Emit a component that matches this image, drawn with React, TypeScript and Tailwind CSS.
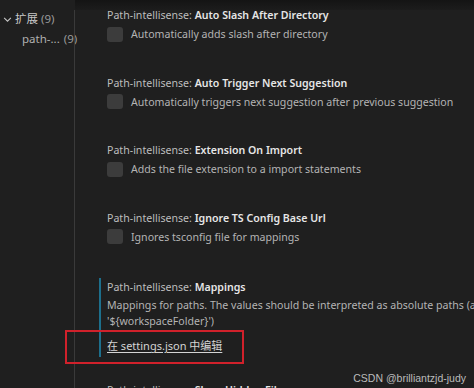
import React from "react";

const font = { fontFamily: '"Noto Sans", "Noto Sans CJK SC", sans-serif' };

function Checkbox() {
  return <div className="w-[16px] h-[15px] rounded-[3px] bg-[#3c3c3c] shrink-0" />;
}

function BoolSetting({ name, desc }: { name: string; desc: string }) {
  return (
    <div className="pl-[32px] h-[67.5px] pt-[6px]">
      <div className="h-[18px] leading-[18px] whitespace-nowrap text-[#bdbdbd]">
        Path-intellisense: <span className="font-semibold text-[#e6e6e6]">{name}</span>
      </div>
      <div className="flex items-center gap-[8px] h-[18px] mt-[1px] whitespace-nowrap text-[#b4b4b4]">
        <Checkbox />
        <span className="leading-[18px]">{desc}</span>
      </div>
    </div>
  );
}

export default function App() {
  return (
    <div
      className="relative w-[474px] h-[388px] overflow-hidden bg-[#1f1f1f] flex text-[10.6px]"
      style={font}
    >
      <div className="w-[74px] shrink-0 pt-[10px] text-[#c8c8c8] whitespace-nowrap text-[11.5px]">
        <div className="flex items-center h-[18px] pl-[3px]">
          <svg width="9" height="9" viewBox="0 0 16 16" className="mr-[3px]">
            <path d="M2 5l6 6 6-6" fill="none" stroke="#c8c8c8" strokeWidth="1.8" />
          </svg>
          <span>扩展</span>
          <span className="ml-[3px] text-[#9a9a9a]">(9)</span>
        </div>
        <div className="flex items-center h-[18px] pl-[22px] mt-[2px]">
          <span className="text-[#b0b0b0]">path-...</span>
          <span className="ml-[4px] text-[#9a9a9a]">(9)</span>
        </div>
      </div>
      <div className="w-px bg-[#3a3a3a] mt-[10px] shrink-0" />
      <div className="relative flex-1 min-w-0 overflow-hidden">
        <div className="absolute top-0 left-0 right-0 h-[10px] bg-gradient-to-b from-[#141414] to-[#1c1c1c]" />
        <BoolSetting name="Auto Slash After Directory" desc="Automatically adds slash after directory" />
        <BoolSetting
          name="Auto Trigger Next Suggestion"
          desc="Automatically triggers next suggestion after previous suggestion"
        />
        <BoolSetting name="Extension On Import" desc="Adds the file extension to a import statements" />
        <BoolSetting name="Ignore TS Config Base Url" desc="Ignores tsconfig file for mappings" />
        <div className="pl-[24px] pt-[8px]">
          <div className="border-l-2 border-[#1d6f8c] pl-[6px] pb-[2px]">
            <div className="h-[18px] leading-[18px] whitespace-nowrap text-[#bdbdbd]">
              Path-intellisense: <span className="font-semibold text-[#e6e6e6]">Mappings</span>
            </div>
            <div className="leading-[16px] whitespace-nowrap text-[#b4b4b4] mt-[1px]">
              <div>Mappings for paths. The values should be interpreted as absolute paths (and can contain</div>
              <div>'${"{"}workspaceFolder{"}"}')</div>
            </div>
            <div className="mt-[8px] leading-[18px] whitespace-nowrap text-[#d4d4d4] underline underline-offset-2 text-[11px]">
              在 settings.json 中编辑
            </div>
          </div>
        </div>
        <div className="pl-[32px] pt-[24px] whitespace-nowrap text-[#bdbdbd] leading-[18px]">
          Path-intellisense: <span className="font-semibold text-[#e6e6e6]">Show Hidden Files</span>
        </div>
      </div>
      <div className="absolute left-[65px] top-[330px] w-[179px] h-[34px] border-2 border-[#d0212b]" />
      <div
        className="absolute right-[8px] top-[371px] text-[10.5px] text-[#bcbcbc]"
        style={{ fontFamily: '"Liberation Sans", Arial, sans-serif' }}
      >
        CSDN @brilliantzjd-judy
      </div>
    </div>
  );
}
